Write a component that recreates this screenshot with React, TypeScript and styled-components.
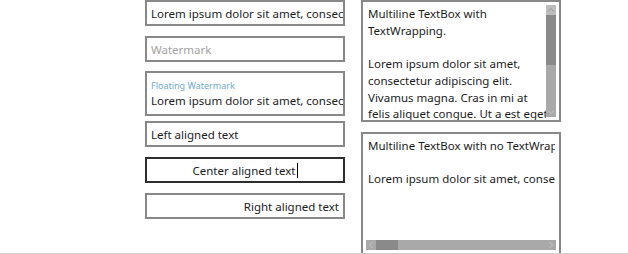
import React from 'react';
import styled, { createGlobalStyle } from 'styled-components';

const GlobalStyle = createGlobalStyle`
  html, body {
    margin: 0;
    padding: 0;
    background: #fff;
  }
  body {
    font-family: "Segoe UI", "Noto Sans", "Open Sans", sans-serif;
    font-size: 11.5px;
    color: #1c1c1c;
  }
`;

const Page = styled.div`
  height: 254px;
  box-sizing: border-box;
  border-bottom: 1px solid #cfcfcf;
  overflow: hidden;
  display: flex;
  align-items: flex-start;
  gap: 16px;
  padding-left: 145px;
`;

const Column = styled.div<{ $gap?: number }>`
  width: 200px;
  display: flex;
  flex-direction: column;
  gap: ${(p) => p.$gap ?? 0}px;
`;

const TextBox = styled.div<{ $align?: 'left' | 'center' | 'right'; $focused?: boolean; $mt?: number }>`
  height: 26px;
  margin-top: ${(p) => p.$mt ?? 0}px;
  box-sizing: border-box;
  border: 2px solid ${(p) => (p.$focused ? '#2e2e2e' : '#888')};
  padding: 0 4px;
  display: flex;
  align-items: center;
  justify-content: ${(p) =>
    p.$align === 'center' ? 'center' : p.$align === 'right' ? 'flex-end' : 'flex-start'};
  white-space: nowrap;
  overflow: hidden;
`;

const Watermark = styled.span`
  color: #a2a2a2;
`;

const FloatingBox = styled.div<{ $mt?: number }>`
  height: 45px;
  margin-top: ${(p) => p.$mt ?? 0}px;
  box-sizing: border-box;
  border: 2px solid #888;
  padding: 6px 4px 0;
  display: flex;
  flex-direction: column;
  white-space: nowrap;
  overflow: hidden;
`;

const FloatLabel = styled.span`
  font-size: 9px;
  line-height: 13px;
  color: #6fa9cb;
`;

const FloatValue = styled.span`
  line-height: 17px;
`;

const Caret = styled.span`
  display: inline-block;
  width: 1px;
  height: 15px;
  background: #000;
  margin-left: 1px;
  vertical-align: middle;
`;

const MultiBox = styled.div<{ $dir: 'row' | 'column'; $h: number }>`
  height: ${(p) => p.$h}px;
  box-sizing: border-box;
  border: 2px solid #888;
  display: flex;
  flex-direction: ${(p) => p.$dir};
  overflow: hidden;
`;

const MultiText = styled.div<{ $lh: number; $clipRight?: number }>`
  flex: 1;
  min-width: 0;
  min-height: 0;
  margin-right: ${(p) => p.$clipRight ?? 0}px;
  padding: 4px 0 0 5px;
  line-height: ${(p) => p.$lh}px;
  white-space: pre;
  overflow: hidden;
`;

const VScroll = styled.div`
  width: 10px;
  margin: 3px 3px 3px 0;
  display: flex;
  flex-direction: column;
  background: #a9a9a9;
`;

const HScroll = styled.div`
  height: 10px;
  margin: 0 3px 3px;
  flex: none;
  display: flex;
  background: #a9a9a9;
`;

const ArrowCell = styled.div<{ $light?: boolean }>`
  width: 10px;
  height: 10px;
  flex: none;
  display: flex;
  align-items: center;
  justify-content: center;
  background: ${(p) => (p.$light ? '#bdbdbd' : 'transparent')};
`;

const Thumb = styled.div<{ $len: number; $vertical?: boolean }>`
  flex: none;
  background: #8a8a8a;
  ${(p) => (p.$vertical ? `height: ${p.$len}px;` : `width: ${p.$len}px;`)}
`;

const Track = styled.div`
  flex: 1;
`;

const Chevron = ({ dir, color }: { dir: 'up' | 'down' | 'left' | 'right'; color: string }) => {
  const paths: Record<string, string> = {
    up: 'M2 6.5 L5 3.5 L8 6.5',
    down: 'M2 3.5 L5 6.5 L8 3.5',
    left: 'M6.5 2 L3.5 5 L6.5 8',
    right: 'M3.5 2 L6.5 5 L3.5 8',
  };
  return (
    <svg width="10" height="10" viewBox="0 0 10 10">
      <path d={paths[dir]} fill="none" stroke={color} strokeWidth="1" />
    </svg>
  );
};

const wrapped = [
  'Multiline TextBox with',
  'TextWrapping.',
  '',
  'Lorem ipsum dolor sit amet,',
  'consectetur adipiscing elit.',
  'Vivamus magna. Cras in mi at',
  'felis aliquet congue. Ut a est eget',
  'ligula molestie gravida.',
].join('\n');

const unwrapped = [
  'Multiline TextBox with no TextWrapping.',
  '',
  'Lorem ipsum dolor sit amet, consectetur adipiscing elit. Vivamus magna.',
].join('\n');

const lorem = 'Lorem ipsum dolor sit amet, consectetur adipiscing elit.';

export default function App() {
  return (
    <>
      <GlobalStyle />
      <Page>
        <Column>
          <TextBox>{lorem}</TextBox>
          <TextBox $mt={10}>
            <Watermark>Watermark</Watermark>
          </TextBox>
          <FloatingBox $mt={9}>
            <FloatLabel>Floating Watermark</FloatLabel>
            <FloatValue>{lorem}</FloatValue>
          </FloatingBox>
          <TextBox $mt={5}>Left aligned text</TextBox>
          <TextBox $mt={10} $align="center" $focused>
            Center aligned text
            <Caret />
          </TextBox>
          <TextBox $mt={10} $align="right">
            Right aligned text
          </TextBox>
        </Column>
        <Column $gap={10}>
          <MultiBox $dir="row" $h={122}>
            <MultiText $lh={16.7}>{wrapped}</MultiText>
            <VScroll>
              <ArrowCell $light>
                <Chevron dir="up" color="#9a9a9a" />
              </ArrowCell>
              <Thumb $vertical $len={50} />
              <Track />
              <ArrowCell>
                <Chevron dir="down" color="#c4c4c4" />
              </ArrowCell>
            </VScroll>
          </MultiBox>
          <MultiBox $dir="column" $h={123}>
            <MultiText $lh={16.5} $clipRight={4}>
              {unwrapped}
            </MultiText>
            <HScroll>
              <ArrowCell>
                <Chevron dir="left" color="#c4c4c4" />
              </ArrowCell>
              <Thumb $len={22} />
              <Track />
              <ArrowCell>
                <Chevron dir="right" color="#c4c4c4" />
              </ArrowCell>
            </HScroll>
          </MultiBox>
        </Column>
      </Page>
    </>
  );
}
